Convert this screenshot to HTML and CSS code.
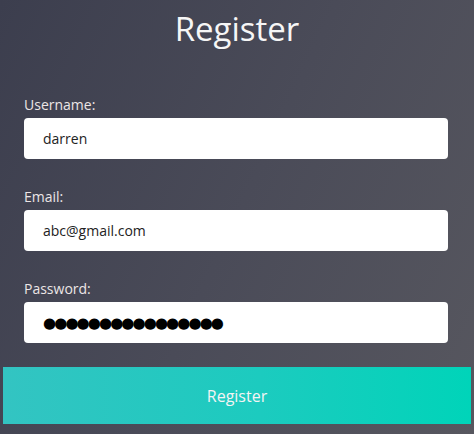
FILE: index.html
```html
<!DOCTYPE html>
<html lang="en">
<head>
<meta charset="utf-8">
<title>Register</title>
<link rel="stylesheet" href="styles.css">
</head>
<body>
<form class="register">
  <h1 class="title">Register</h1>
  <div class="fields">
    <div class="field">
      <label class="label" for="username">Username:</label>
      <input class="input" id="username" type="text" value="darren">
    </div>
    <div class="field">
      <label class="label" for="email">Email:</label>
      <input class="input" id="email" type="text" value="abc@gmail.com">
    </div>
    <div class="field">
      <label class="label" for="password">Password:</label>
      <input class="input input-dots" id="password" type="text" value="●●●●●●●●●●●●●●●●" readonly>
    </div>
  </div>
  <button class="submit" type="button">Register</button>
</form>
</body>
</html>
```
FILE: styles.css
```css
html, body {
  margin: 0;
  padding: 0;
}
body {
  width: 474px;
  height: 434px;
  overflow: hidden;
  background: linear-gradient(115deg, #3c3e4e 0%, #4a4b58 50%, #57575f 100%);
  font-family: "Open Sans", "DejaVu Sans", sans-serif;
}
.register {
  display: flex;
  flex-direction: column;
}
.title {
  margin: 6px 0 0;
  font-size: 33px;
  line-height: 45px;
  font-weight: 400;
  text-align: center;
  color: #f6f6f6;
}
.fields {
  display: flex;
  flex-direction: column;
  gap: 27.5px;
  padding: 43.5px 26px 0 24px;
}
.field {
  display: flex;
  flex-direction: column;
  gap: 3.5px;
}
.label {
  font-size: 14px;
  line-height: 20px;
  color: #ece6e6;
}
.input {
  box-sizing: border-box;
  height: 41px;
  width: 100%;
  border: none;
  border-radius: 4px;
  background: #ffffff;
  padding: 0 19px;
  font-family: "Open Sans", "DejaVu Sans", sans-serif;
  font-size: 14px;
  color: #222222;
  outline: none;
}
.input-dots {
  font-family: "DejaVu Sans", sans-serif;
  font-size: 15px;
  color: #000000;
  letter-spacing: -1.9px;
}
.submit {
  margin: 24px 3px 0;
  height: 57px;
  border: none;
  background: linear-gradient(90deg, #33c4c2 0%, #1ccbbf 55%, #00d4b9 100%);
  color: #f4f4f4;
  font-family: "Open Sans", "DejaVu Sans", sans-serif;
  font-size: 16px;
}
```
